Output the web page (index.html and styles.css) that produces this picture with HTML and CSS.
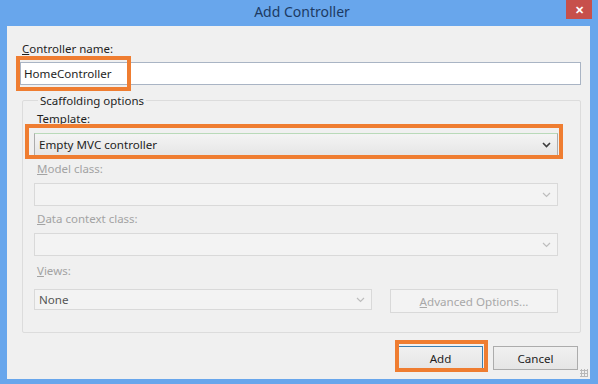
FILE: index.html
```html
<!DOCTYPE html>
<html lang="en">
<head>
  <meta charset="UTF-8">
  <title>Add Controller</title>
  <link rel="stylesheet" href="styles.css">
</head>
<body>
  <div class="window">
    <div class="titlebar">
      <span></span>
      <span class="title">Add Controller</span>
      <span class="close-cell"><span class="close">&#x2715;</span></span>
    </div>

    <div class="client">
      <div class="lbl"><u>C</u>ontroller name:</div>
      <div class="textbox">HomeController</div>

      <fieldset class="group">
        <legend>Scaffolding options</legend>

        <div class="lbl">Template:</div>
        <div class="select active">
          <span>Empty MVC controller</span>
          <svg class="chev" width="9" height="6" viewBox="0 0 9 6"><polyline points="1,1 4.5,4.5 8,1" /></svg>
        </div>

        <div class="lbl off"><u>M</u>odel class:</div>
        <div class="select off">
          <span></span>
          <svg class="chev" width="9" height="6" viewBox="0 0 9 6"><polyline points="1,1 4.5,4.5 8,1" /></svg>
        </div>

        <div class="lbl off"><u>D</u>ata context class:</div>
        <div class="select off">
          <span></span>
          <svg class="chev" width="9" height="6" viewBox="0 0 9 6"><polyline points="1,1 4.5,4.5 8,1" /></svg>
        </div>

        <div class="lbl off views-lbl"><u>V</u>iews:</div>
        <div class="views-row">
          <div class="select off views">
            <span>None</span>
            <svg class="chev" width="9" height="6" viewBox="0 0 9 6"><polyline points="1,1 4.5,4.5 8,1" /></svg>
          </div>
          <div class="btn off adv"><u>A</u>dvanced Options...</div>
        </div>
      </fieldset>

      <div class="buttons">
        <div class="btn add">Add</div>
        <div class="btn">Cancel</div>
      </div>

      <!-- orange highlight boxes drawn over the dialog -->
      <span class="mark mark-name"></span>
      <span class="mark mark-template"></span>
      <span class="mark mark-add"></span>
      <span class="grip"></span>
    </div>
  </div>
</body>
</html>
```

FILE: styles.css
```css
body {
  margin: 0;
  font-family: "Noto Sans", "Open Sans", Arial, sans-serif;
  background-color: #68a6ec;
  color: #1e1e1e;
}

.window {
  width: 598px;
  height: 384px;
  box-sizing: border-box;
  padding: 0 8px 5px 7px;
  background-color: #68a6ec;
  display: flex;
  flex-direction: column;
}

.titlebar {
  height: 26px;
  display: grid;
  grid-template-columns: 1fr auto 1fr;
  margin: 0 -8px 0 -7px;
}
.titlebar .title {
  font-family: "Noto Sans", Arial, sans-serif;
  font-size: 14px;
  color: #1c3a63;
  line-height: 24px;
  padding-left: 6px;
}
.close-cell {
  display: flex;
  justify-content: flex-end;
  align-items: flex-start;
  padding-right: 6px;
}
.close {
  width: 26px;
  height: 19px;
  background-color: #c7504b;
  color: white;
  font-size: 11px;
  font-weight: bold;
  display: flex;
  justify-content: center;
  align-items: center;
}

.client {
  flex: 1;
  position: relative;
  background-color: #f0f0f0;
  padding: 15px 9px 0 13px;
  display: flex;
  flex-direction: column;
  font-size: 11.5px;
}

.lbl {
  line-height: 16px;
  height: 16px;
  margin-left: 2px;
}
.lbl.off {
  color: #a3a3a3;
}

.textbox {
  margin-top: 5px;
  height: 21px;
  border: 1px solid #a9b4c4;
  background: white;
  line-height: 21px;
  padding-left: 3px;
  font-size: 11.6px;
}

.group {
  margin: 8px 0 0 2px;
  padding: 3px 22px 0 11px;
  border: 1px solid #dcdcdc;
  border-radius: 2px;
  height: 240px;
  box-sizing: border-box;
}
.group legend {
  padding: 0 2px;
  margin-left: 4px;
  font-size: 11.5px;
}
.group .lbl {
  margin-left: 3px;
}

.select {
  margin-top: 6px;
  margin-bottom: 5px;
  height: 21px;
  display: flex;
  justify-content: space-between;
  align-items: center;
  padding: 0 6px 0 4px;
  font-size: 11.6px;
}
.select.active {
  border: 1px solid #acacac;
  border-top-color: #b9dab9;
  background: linear-gradient(#f4f4f4, #e6e6e6);
}
.select.off {
  border: 1px solid #d9d9d9;
  background-color: #f3f3f3;
  color: #555;
}
.chev polyline {
  fill: none;
  stroke: #3d3d3d;
  stroke-width: 1.6;
}
.select.off .chev polyline {
  stroke: #bdbdbd;
  stroke-width: 1.2;
}

.views-lbl {
  margin-top: 7px;
}
.views-row {
  display: flex;
  gap: 18px;
  margin-top: 4px;
}
.views-row .select {
  width: 338px;
  box-sizing: border-box;
}
.views-row .adv {
  flex: 1;
  margin-top: 6px;
}

.btn {
  height: 22px;
  border: 1px solid #acacac;
  background: linear-gradient(#f0f0f0, #e5e5e5);
  display: flex;
  justify-content: center;
  align-items: center;
  font-size: 11.6px;
}
.btn.off {
  border-color: #d9d9d9;
  background: #f3f3f3;
  color: #a8a8a8;
}

.buttons {
  display: flex;
  justify-content: flex-end;
  gap: 10px;
  margin-top: 13px;
  margin-right: 3px;
}
.buttons .btn {
  width: 83px;
}
.buttons .add {
  border-color: #3c7fb1;
}

.mark {
  position: absolute;
  border: 4px solid #ef7d31;
}
.mark-name {
  left: 9px;
  top: 30px;
  width: 107px;
  height: 27px;
}
.mark-template {
  left: 18px;
  top: 98px;
  width: 530px;
  height: 27px;
}
.mark-add {
  left: 388px;
  top: 314px;
  width: 85px;
  height: 24px;
}

.grip {
  position: absolute;
  right: 2px;
  bottom: 2px;
  width: 8px;
  height: 8px;
  background: radial-gradient(circle, #b8b8b8 1px, transparent 1.2px) 0 0 / 3px 3px;
}
```
